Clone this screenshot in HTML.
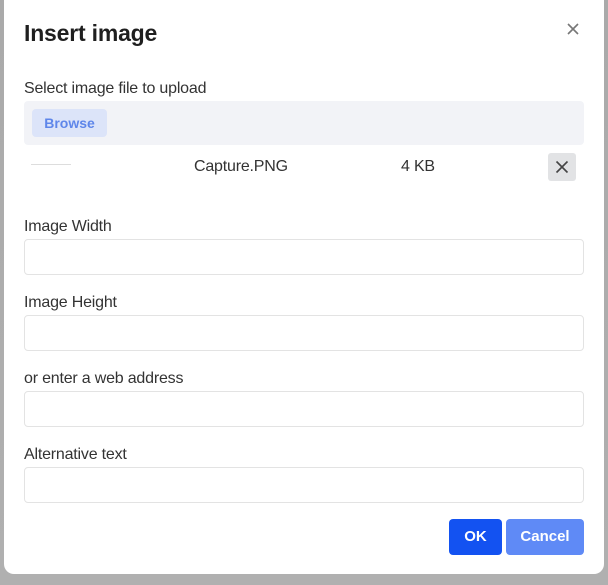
<!DOCTYPE html>
<html><head><style>
html,body{margin:0;padding:0;width:608px;height:585px;overflow:hidden;background:#b3b3b3;font-family:"Liberation Sans",Arial,sans-serif;}
.bg{position:absolute;left:0;top:0;width:608px;height:585px;background:linear-gradient(#aaaaaa,#b0b0b0);}
.dlg{position:absolute;left:4px;top:-10px;width:600px;height:584px;background:#fff;border-radius:10px;}
.t{position:absolute;left:24px;top:20px;font-size:23px;font-weight:bold;color:#1f1f1f;letter-spacing:-0.2px;}
.x{position:absolute;left:565px;top:21px;}
.lbl{position:absolute;left:24px;font-size:16px;color:#333;letter-spacing:-0.2px;}
.inp{position:absolute;left:24px;width:558px;height:34px;border:1px solid #e3e3e3;border-radius:4px;}
.drop{position:absolute;left:24px;top:101px;width:560px;height:44px;background:#f2f3f7;border-radius:4px;}
.br{position:absolute;left:32px;top:109px;width:75px;height:28px;background:#dce4f9;border-radius:4px;color:#5e86ea;font-weight:bold;font-size:14px;text-align:center;line-height:28px;}
.ft{position:absolute;top:158px;font-size:16px;color:#333;letter-spacing:-0.2px;}
.del{position:absolute;left:548px;top:153px;width:28px;height:28px;background:#e2e3e5;border-radius:3px;}
.btn{position:absolute;top:519px;height:36px;border-radius:4px;color:#fff;font-weight:bold;font-size:15px;text-align:center;line-height:36px;}
</style></head><body>
<div class="bg"></div>
<div class="dlg"></div>
<div class="t">Insert image</div>
<svg class="x" width="16" height="16" viewBox="0 0 16 16"><path d="M3 3L13 13M13 3L3 13" stroke="#777" stroke-width="1.6"/></svg>
<div class="lbl" style="top:80px">Select image file to upload</div>
<div class="drop"></div>
<div class="br">Browse</div>
<div style="position:absolute;left:31px;top:164px;width:40px;height:1px;background:#ddd"></div>
<div class="ft" style="left:194px">Capture.PNG</div>
<div class="ft" style="left:401px">4 KB</div>
<div class="del"><svg width="28" height="28" viewBox="0 0 28 28"><path d="M8.5 8.5L19.5 19.5M19.5 8.5L8.5 19.5" stroke="#444" stroke-width="1.6"/></svg></div>
<div class="lbl" style="top:218px">Image Width</div>
<div class="inp" style="top:239px"></div>
<div class="lbl" style="top:294px">Image Height</div>
<div class="inp" style="top:315px"></div>
<div class="lbl" style="top:370px">or enter a web address</div>
<div class="inp" style="top:391px"></div>
<div class="lbl" style="top:446px">Alternative text</div>
<div class="inp" style="top:467px"></div>
<div class="btn" style="left:449px;width:53px;background:#1352f1">OK</div>
<div class="btn" style="left:506px;width:78px;background:#5f8af6">Cancel</div>
</body></html>
